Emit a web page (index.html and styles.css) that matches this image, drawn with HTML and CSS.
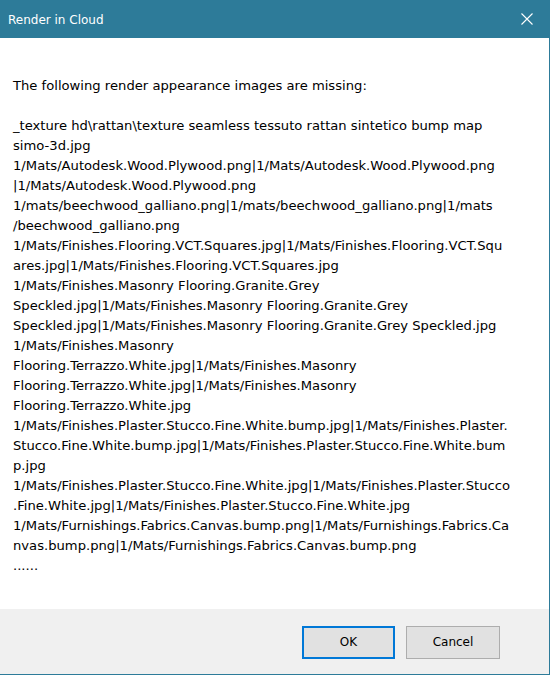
FILE: index.html
```html
<!DOCTYPE html>
<html lang="en">
<head>
    <meta charset="UTF-8">
    <title>Render in Cloud</title>
    <link rel="stylesheet" href="styles.css">
</head>
<body>
    <div class="dialog">
        <div class="titlebar">
            <span class="title">Render in Cloud</span>
            <button class="close" aria-label="Close">
                <svg width="12" height="12" viewBox="0 0 12 12">
                    <path d="M0.5 0.5 L11.5 11.5 M11.5 0.5 L0.5 11.5" stroke="#fff" stroke-width="1.1" fill="none"/>
                </svg>
            </button>
        </div>
        <div class="content">
            <p class="intro">The following render appearance images are missing:</p>
            <div class="missing">
                <div>_texture hd\rattan\texture seamless tessuto rattan sintetico bump map</div>
                <div>simo-3d.jpg</div>
                <div>1/Mats/Autodesk.Wood.Plywood.png|1/Mats/Autodesk.Wood.Plywood.png</div>
                <div>|1/Mats/Autodesk.Wood.Plywood.png</div>
                <div>1/mats/beechwood_galliano.png|1/mats/beechwood_galliano.png|1/mats</div>
                <div>/beechwood_galliano.png</div>
                <div>1/Mats/Finishes.Flooring.VCT.Squares.jpg|1/Mats/Finishes.Flooring.VCT.Squ</div>
                <div>ares.jpg|1/Mats/Finishes.Flooring.VCT.Squares.jpg</div>
                <div>1/Mats/Finishes.Masonry Flooring.Granite.Grey</div>
                <div>Speckled.jpg|1/Mats/Finishes.Masonry Flooring.Granite.Grey</div>
                <div>Speckled.jpg|1/Mats/Finishes.Masonry Flooring.Granite.Grey Speckled.jpg</div>
                <div>1/Mats/Finishes.Masonry</div>
                <div>Flooring.Terrazzo.White.jpg|1/Mats/Finishes.Masonry</div>
                <div>Flooring.Terrazzo.White.jpg|1/Mats/Finishes.Masonry</div>
                <div>Flooring.Terrazzo.White.jpg</div>
                <div>1/Mats/Finishes.Plaster.Stucco.Fine.White.bump.jpg|1/Mats/Finishes.Plaster.</div>
                <div>Stucco.Fine.White.bump.jpg|1/Mats/Finishes.Plaster.Stucco.Fine.White.bum</div>
                <div>p.jpg</div>
                <div>1/Mats/Finishes.Plaster.Stucco.Fine.White.jpg|1/Mats/Finishes.Plaster.Stucco</div>
                <div>.Fine.White.jpg|1/Mats/Finishes.Plaster.Stucco.Fine.White.jpg</div>
                <div>1/Mats/Furnishings.Fabrics.Canvas.bump.png|1/Mats/Furnishings.Fabrics.Ca</div>
                <div>nvas.bump.png|1/Mats/Furnishings.Fabrics.Canvas.bump.png</div>
                <div class="more">......</div>
            </div>
        </div>
        <div class="footer">
            <button class="btn btn-default">OK</button>
            <button class="btn">Cancel</button>
        </div>
    </div>
</body>
</html>
```

FILE: styles.css
```css
:root {
    --title-color: #2d7b99;
    --footer-color: #f0f0f0;
    --button-color: #e1e1e1;
    --focus-color: #0078d7;
}
body {
    margin: 0;
    background-color: #ffffff;
    font-family: 'DejaVu Sans', 'Noto Sans', sans-serif;
    font-size: 13.15px;
    color: #000000;
}
.dialog {
    width: 549px;
    height: 674px;
    display: flex;
    flex-direction: column;
    background-color: white;
    border-right: 1px solid var(--title-color);
    border-bottom: 1px solid var(--title-color);
}
.titlebar {
    height: 38px;
    display: flex;
    align-items: center;
    justify-content: space-between;
    background-color: var(--title-color);
    color: white;
    padding-left: 8px;
}
.title {
    font-size: 12px;
    padding-top: 1px;
}
.close {
    width: 42px;
    height: 38px;
    display: flex;
    align-items: center;
    justify-content: center;
    background: none;
    border: none;
    padding: 0;
    margin-right: 1px;
}
.content {
    flex: 1;
    padding: 38px 13px 0 13px;
    line-height: 20px;
    white-space: nowrap;
}
.intro {
    margin: 0 0 20px 0;
}
.footer {
    height: 65px;
    display: flex;
    align-items: center;
    justify-content: flex-end;
    gap: 11px;
    padding-right: 49px;
    background-color: var(--footer-color);
}
.btn {
    width: 94px;
    height: 33px;
    margin-top: 1px;
    background-color: var(--button-color);
    border: 1px solid #adadad;
    font-family: inherit;
    font-size: 12px;
    color: black;
}
.btn-default {
    width: 93px;
    border: 2px solid var(--focus-color);
}
```
